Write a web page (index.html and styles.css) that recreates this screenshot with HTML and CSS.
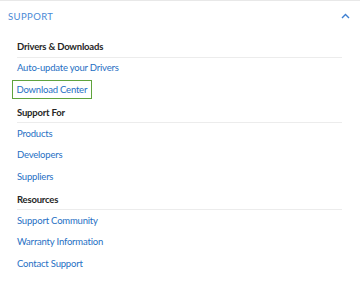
FILE: index.html
```html
<!DOCTYPE html>
<html>
  <head>
    <meta charset="utf-8" />
    <title>Support</title>
    <link rel="stylesheet" href="styles.css">
  </head>
  <body>
    <div class="accordion">
      <div class="accordionHeader">
        <span class="accordionTitle">SUPPORT</span>
        <svg class="chevron" width="9" height="6" viewBox="0 0 9 6">
          <path d="M1 5 L4.5 1.5 L8 5" fill="none" stroke="#3d7fd1" stroke-width="1.4"/>
        </svg>
      </div>
      <div class="accordionBody">
        <h3 class="groupTitle">Drivers &amp; Downloads</h3>
        <ul class="links">
          <li><a href="#">Auto-update your Drivers</a></li>
          <li><a class="focused" href="#">Download Center</a></li>
        </ul>
        <h3 class="groupTitle">Support For</h3>
        <ul class="links">
          <li><a href="#">Products</a></li>
          <li><a href="#">Developers</a></li>
          <li><a href="#">Suppliers</a></li>
        </ul>
        <h3 class="groupTitle">Resources</h3>
        <ul class="links">
          <li><a href="#">Support Community</a></li>
          <li><a href="#">Warranty Information</a></li>
          <li><a href="#">Contact Support</a></li>
        </ul>
      </div>
    </div>
  </body>
</html>
```

FILE: styles.css
```css
html {
  background-color: white;
  font-family: "Lato", "Open Sans", sans-serif;
}

body {
  margin: 0;
}

.accordion {
  border-top: 1px solid #e8e8e8;
}

.accordionHeader {
  display: flex;
  justify-content: space-between;
  align-items: center;
  height: 30px;
  padding: 0 10px 0 8px;
}

.accordionTitle {
  font-size: 9.5px;
  letter-spacing: 0.4px;
  color: #4a8ad6;
}

.chevron {
  display: block;
}

.accordionBody {
  padding: 4px 18px 0 17px;
}

.groupTitle {
  margin: 0;
  padding-top: 6px;
  height: 22.5px;
  box-sizing: border-box;
  line-height: 12px;
  font-size: 9.5px;
  letter-spacing: -0.2px;
  font-weight: 700;
  color: #262626;
  border-bottom: 1.5px solid #ececec;
}

.links {
  list-style: none;
  margin: 0;
  padding: 0;
}

.links li {
  height: 21.5px;
  display: flex;
  align-items: center;
}

.links a {
  font-size: 9.5px;
  letter-spacing: -0.2px;
  line-height: 12px;
  color: #1f6fc4;
  text-decoration: none;
}

.links a.focused {
  margin-left: -5px;
  padding: 2.5px 4px 2.5px 3.5px;
  border: 1.5px solid #5fa33d;
}
```
